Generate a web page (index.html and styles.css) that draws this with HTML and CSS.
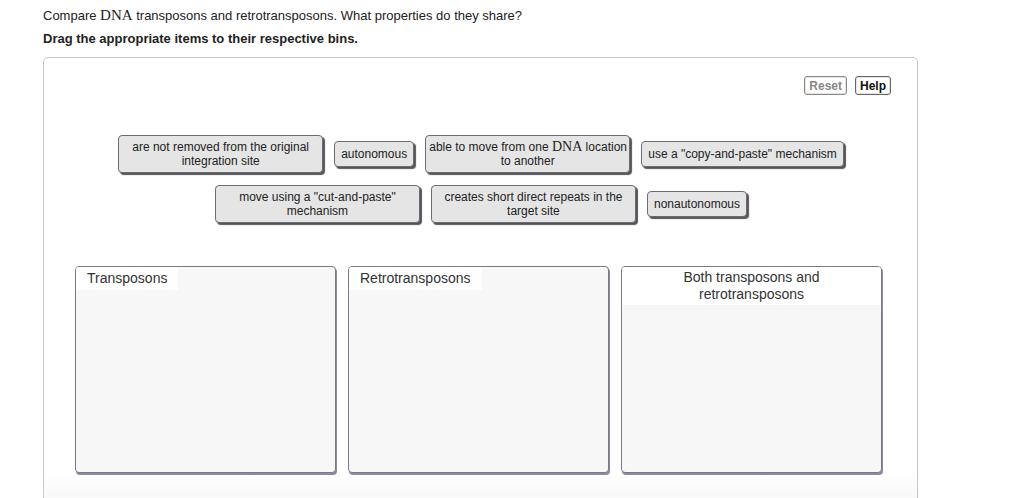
FILE: index.html
```html
<!DOCTYPE html>
<html lang="en">
<head>
    <meta charset="UTF-8">
    <title>Compare DNA transposons and retrotransposons</title>
    <link rel="stylesheet" href="styles.css">
</head>
<body>
    <div class="question">
        <p class="prompt">Compare <span class="math">DNA</span> transposons and retrotransposons. What properties do they share?</p>
        <p class="instructions">Drag the appropriate items to their respective bins.</p>
    </div>

    <div class="panel">
        <div class="tools">
            <button class="tool-btn reset">Reset</button>
            <button class="tool-btn help">Help</button>
        </div>

        <div class="items">
            <div class="items-row">
                <div class="item wide">are not removed from the original integration site</div>
                <div class="item">autonomous</div>
                <div class="item wide nowrap">able to move from one <span class="math">DNA</span> location<br>to another</div>
                <div class="item">use a "copy-and-paste" mechanism</div>
            </div>
            <div class="items-row">
                <div class="item wide">move using a "cut-and-paste" mechanism</div>
                <div class="item wide">creates short direct repeats in the target site</div>
                <div class="item">nonautonomous</div>
            </div>
        </div>

        <div class="bins">
            <div class="bin">
                <div class="bin-label">Transposons</div>
            </div>
            <div class="bin">
                <div class="bin-label">Retrotransposons</div>
            </div>
            <div class="bin">
                <div class="bin-label full">Both transposons and retrotransposons</div>
            </div>
        </div>
    </div>
</body>
</html>
```

FILE: styles.css
```css
* {
    box-sizing: border-box;
}

body {
    margin: 0;
    padding: 0 0 0 43px;
    font-family: 'Liberation Sans', Arial, sans-serif;
    color: #222;
    background-color: white;
    overflow: hidden;
}

.question p {
    margin: 0;
    font-size: 13px;
}

.prompt {
    padding-top: 7px;
    line-height: 16px;
}

.math {
    font-family: 'Liberation Serif', 'Times New Roman', serif;
    font-size: 15px;
}

.instructions {
    margin-top: 7px !important;
    font-weight: bold;
    line-height: 16px;
}

.panel {
    margin-top: 10px;
    width: 875px;
    height: 470px;
    border: 1px solid #c8c8c8;
    border-radius: 5px;
    background: linear-gradient(to bottom, white 0%, white 88%, #f2f2f2 100%);
    padding: 18px 26px 0 31px;
}

.tools {
    display: flex;
    justify-content: flex-end;
    gap: 8px;
}

.tool-btn {
    font-family: 'Liberation Sans', Arial, sans-serif;
    font-size: 12px;
    font-weight: bold;
    height: 19px;
    padding: 0 4px;
    background: white;
    border: 1px solid #888;
    border-radius: 3px;
    box-shadow: inset 0 0 0 1px #e4e4e4;
}

.reset {
    color: #888;
}

.help {
    color: #111;
    border-color: #666;
}

.items {
    margin-top: 40px;
    display: flex;
    flex-direction: column;
    gap: 12px;
    padding-right: 4px;
}

.items-row {
    display: flex;
    justify-content: center;
    align-items: center;
    gap: 11px;
}

.item {
    font-size: 12px;
    line-height: 14px;
    color: #222;
    text-align: center;
    background-color: #e5e5e5;
    border: 1px solid #6c6c78;
    border-radius: 4px;
    box-shadow: 2px 2px 1px #555;
    padding: 5px 6px;
}

.item.wide {
    width: 205px;
    padding: 4px 3px;
}

.item.nowrap {
    white-space: nowrap;
}

.items-row .math {
    font-size: 14px;
}

.bins {
    margin-top: 43px;
    display: flex;
    gap: 12px;
}

.bin {
    width: 261px;
    height: 207px;
    background-color: #f7f7f7;
    border: 1px solid #7a7a86;
    border-radius: 4px;
    box-shadow: 1px 2px 0 #8e8aa4;
}

.bin-label {
    display: inline-block;
    background-color: white;
    font-size: 14px;
    line-height: 17px;
    color: #333;
    padding: 3px 11px 3px 11px;
    border-top-left-radius: 3px;
}

.bin-label.full {
    display: block;
    text-align: center;
    padding: 2px 55px;
    border-top-right-radius: 3px;
}
```
